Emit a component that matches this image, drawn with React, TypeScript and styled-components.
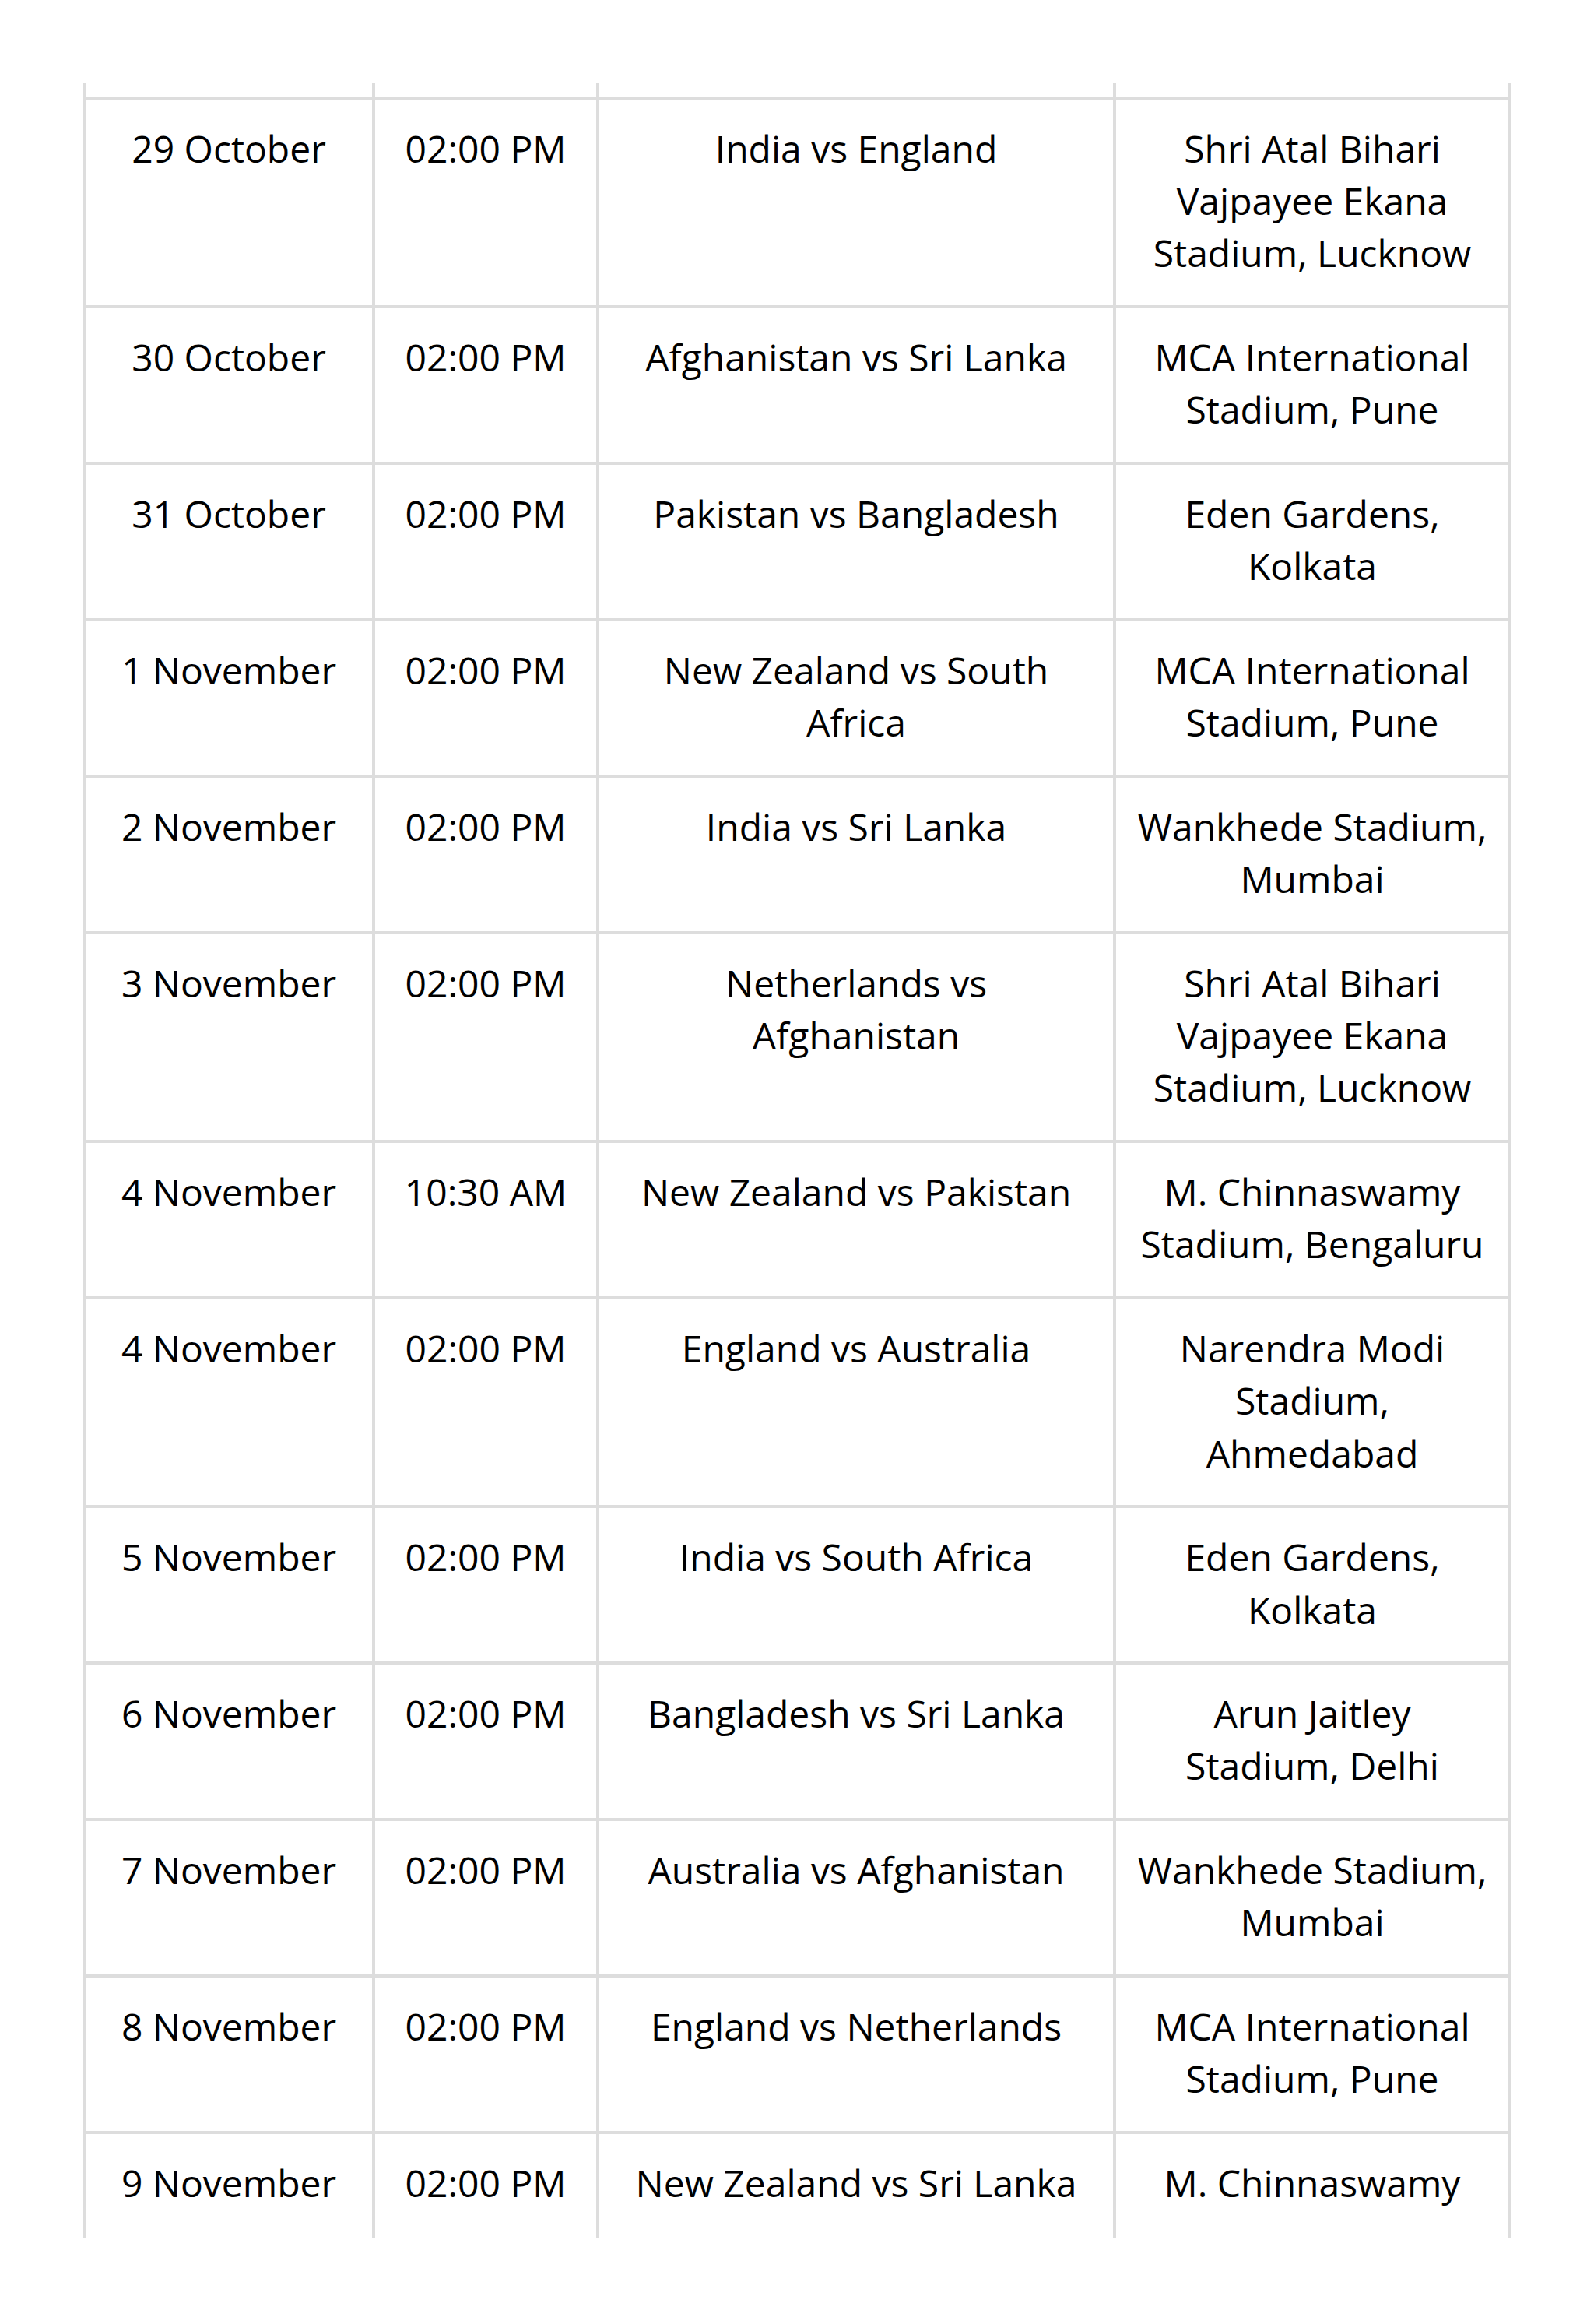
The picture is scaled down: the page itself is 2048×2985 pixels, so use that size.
import styled, { createGlobalStyle } from "styled-components";

const GlobalStyle = createGlobalStyle`
	html, body {
		margin: 0;
		padding: 0;
		background: #ffffff;
	}
	body {
		font-family: "Open Sans", "Noto Sans", sans-serif;
		color: #000000;
	}
`;

const Page = styled.div`
	width: 2048px;
	height: 2985px;
	padding-top: 106px;
	box-sizing: border-box;
	display: flex;
	justify-content: center;
	align-items: flex-start;
`;

// the table is a scrolled view, cut at both ends
const Viewport = styled.div`
	width: 1836px;
	height: 2769px;
	overflow: hidden;
`;

const Table = styled.table`
	width: 1836px;
	table-layout: fixed;
	border-collapse: collapse;
`;

// a row that runs on past the bottom of the view
const Row = styled.tr<{ $cut?: boolean }>`
	height: ${(props) => (props.$cut ? "202px" : "auto")};
`;

const Cell = styled.td`
	border: 4px solid #dddddd;
	padding: 29px 24px 33.6px;
	font-size: 48px;
	line-height: 1.4;
	text-align: center;
	vertical-align: top;
	word-wrap: break-word;
`;

const StubCell = styled.td`
	border-left: 4px solid #dddddd;
	border-right: 4px solid #dddddd;
	border-bottom: 4px solid #dddddd;
	height: 18px;
	padding: 0;
`;

type Match = {
	date: string;
	time: string;
	teams: string;
	venue: string;
};

const matches: Match[] = [
	{ date: "29 October", time: "02:00 PM", teams: "India vs England", venue: "Shri Atal Bihari Vajpayee Ekana Stadium, Lucknow" },
	{ date: "30 October", time: "02:00 PM", teams: "Afghanistan vs Sri Lanka", venue: "MCA International Stadium, Pune" },
	{ date: "31 October", time: "02:00 PM", teams: "Pakistan vs Bangladesh", venue: "Eden Gardens, Kolkata" },
	{ date: "1 November", time: "02:00 PM", teams: "New Zealand vs South Africa", venue: "MCA International Stadium, Pune" },
	{ date: "2 November", time: "02:00 PM", teams: "India vs Sri Lanka", venue: "Wankhede Stadium, Mumbai" },
	{ date: "3 November", time: "02:00 PM", teams: "Netherlands vs Afghanistan", venue: "Shri Atal Bihari Vajpayee Ekana Stadium, Lucknow" },
	{ date: "4 November", time: "10:30 AM", teams: "New Zealand vs Pakistan", venue: "M. Chinnaswamy Stadium, Bengaluru" },
	{ date: "4 November", time: "02:00 PM", teams: "England vs Australia", venue: "Narendra Modi Stadium, Ahmedabad" },
	{ date: "5 November", time: "02:00 PM", teams: "India vs South Africa", venue: "Eden Gardens, Kolkata" },
	{ date: "6 November", time: "02:00 PM", teams: "Bangladesh vs Sri Lanka", venue: "Arun Jaitley Stadium, Delhi" },
	{ date: "7 November", time: "02:00 PM", teams: "Australia vs Afghanistan", venue: "Wankhede Stadium, Mumbai" },
	{ date: "8 November", time: "02:00 PM", teams: "England vs Netherlands", venue: "MCA International Stadium, Pune" },
	// only the first line of this venue is in view
	{ date: "9 November", time: "02:00 PM", teams: "New Zealand vs Sri Lanka", venue: "M. Chinnaswamy" },
];

function App() {
	return (
		<>
			<GlobalStyle />
			<Page>
				<Viewport>
					<Table>
						<colgroup>
							<col style={{ width: "372px" }} />
							<col style={{ width: "288px" }} />
							<col style={{ width: "664px" }} />
							<col style={{ width: "508px" }} />
						</colgroup>
						<tbody>
							<tr>
								<StubCell />
								<StubCell />
								<StubCell />
								<StubCell />
							</tr>
							{matches.map((m, i) => (
								<Row key={i} $cut={i === matches.length - 1}>
									<Cell>{m.date}</Cell>
									<Cell>{m.time}</Cell>
									<Cell>{m.teams}</Cell>
									<Cell>{m.venue}</Cell>
								</Row>
							))}
						</tbody>
					</Table>
				</Viewport>
			</Page>
		</>
	);
}

export default App;
